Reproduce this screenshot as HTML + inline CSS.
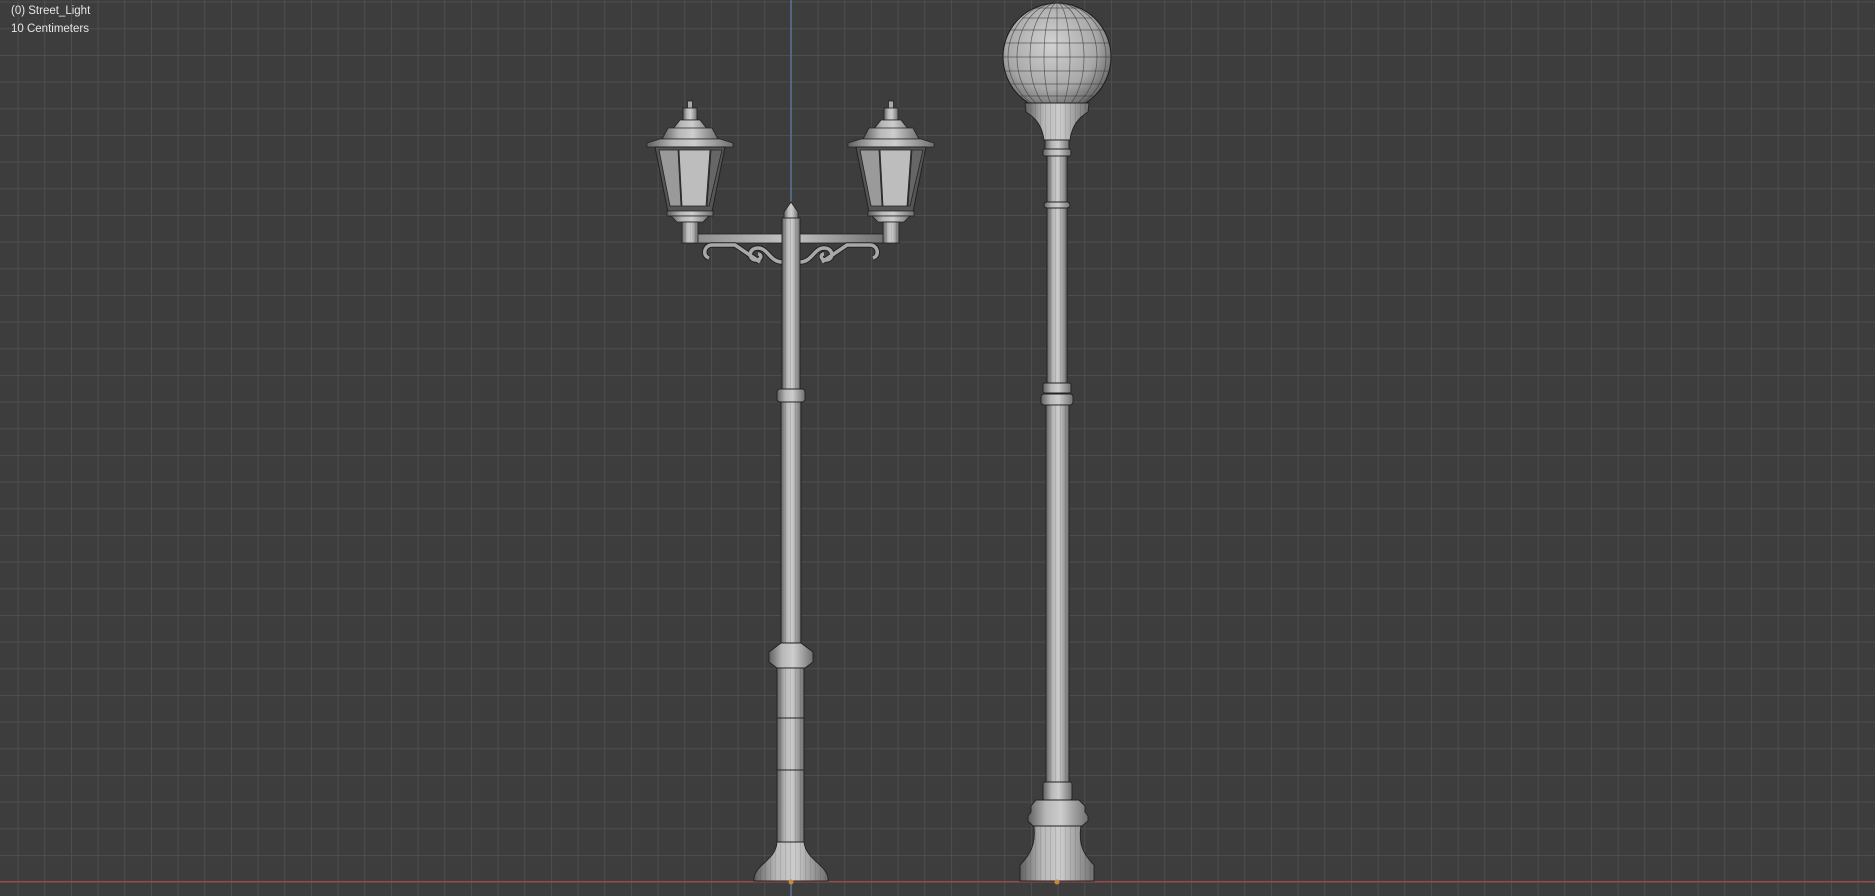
<!DOCTYPE html>
<html><head><meta charset="utf-8"><style>
html,body{margin:0;padding:0;background:#3d3d3d;overflow:hidden;width:1875px;height:896px}
.t{position:absolute;left:11px;color:#e6e6e6;font:11.5px "Liberation Sans",sans-serif;}
</style></head><body>
<svg width="1875" height="896" style="position:absolute;left:0;top:0">
<defs>
<pattern id="g" x="17.7" y="1.7" width="26.667" height="26.667" patternUnits="userSpaceOnUse">
<path d="M0 0H26.667M0 0V26.667" stroke="#535353" stroke-width="1.5" fill="none"/>
</pattern>
<linearGradient id="m" x1="0" x2="1" y1="0" y2="0">
<stop offset="0" stop-color="#606060"/><stop offset="0.3" stop-color="#b8b8b8"/><stop offset="0.55" stop-color="#cdcdcd"/><stop offset="1" stop-color="#707070"/>
</linearGradient>
<linearGradient id="gl" x1="0" x2="1"><stop offset="0" stop-color="#8a8a8a"/><stop offset="0.5" stop-color="#c4c4c4"/><stop offset="1" stop-color="#6a6a6a"/></linearGradient>
<radialGradient id="sp" cx="0.45" cy="0.38" r="0.6"><stop offset="0" stop-color="#d2d2d2"/><stop offset="0.7" stop-color="#a8a8a8"/><stop offset="1" stop-color="#6e6e6e"/></radialGradient>
<pattern id="w" width="5" height="10" patternUnits="userSpaceOnUse"><path d="M0 0V10" stroke="#222" stroke-opacity="0.3" stroke-width="0.8"/></pattern>
<g id="lant">
<rect x="-2.5" y="101" width="5" height="8" fill="#aaa" stroke="#222" stroke-width="0.8"/>
<rect x="-7" y="108" width="14" height="12" fill="url(#m)" stroke="#222" stroke-width="0.8"/>
<path d="M-10 120H10L22 135H-22Z" fill="url(#m)" stroke="#222" stroke-width="0.8"/>
<path d="M-22 128H22L28 139H-28Z" fill="url(#m)" stroke="#222" stroke-width="0.8"/>
<path d="M-30 139H30L43 143V147H-43V143Z" fill="url(#m)" stroke="#222" stroke-width="0.8"/>
<path d="M-35 147H35L22 212H-22Z" fill="#555" stroke="#222" stroke-width="1"/>
<path d="M-31 150H-12L-9 206H-20Z" fill="#9a9a9a" stroke="#222" stroke-width="0.8"/>
<path d="M-11 150H20L16 206H-8Z" fill="#bdbdbd" stroke="#222" stroke-width="0.8"/>
<path d="M21 150H32L19 206H17Z" fill="#666" stroke="#222" stroke-width="0.8"/>
<rect x="-23" y="211" width="46" height="5" fill="url(#m)" stroke="#222" stroke-width="0.8"/>
<path d="M-19 216H19L13 222H-13Z" fill="url(#m)" stroke="#222" stroke-width="0.8"/>
<rect x="-8" y="222" width="16" height="21" fill="url(#m)" stroke="#222" stroke-width="0.8"/>
<rect x="-8" y="222" width="16" height="21" fill="url(#w)"/>
</g>
</defs>
<rect width="1875" height="896" fill="#3d3d3d"/>
<rect width="1875" height="896" fill="url(#g)"/>
<line x1="791" y1="0" x2="791" y2="896" stroke="#5a7aa8" stroke-width="1.3"/>
<line x1="0" y1="881.7" x2="1875" y2="881.7" stroke="#9a4a4a" stroke-width="1.3"/>
<!-- left lamp -->
<rect x="690" y="234" width="201" height="9" fill="url(#gl)" stroke="#222" stroke-width="0.8"/>
<g fill="none" stroke="#222" stroke-width="5.5">
<path d="M782 262C770 262 768 248 758 248C748 248 748 260 756 260C762 260 762 254 758 254"/>
<path d="M760 262L735 245H712C704 245 702 256 709 258"/>
<path d="M800 262C812 262 814 248 824 248C834 248 834 260 826 260C820 260 820 254 824 254"/>
<path d="M822 262L847 245H870C878 245 880 256 873 258"/>
</g>
<g fill="none" stroke="#a8a8a8" stroke-width="3.5">
<path d="M782 262C770 262 768 248 758 248C748 248 748 260 756 260C762 260 762 254 758 254"/>
<path d="M760 262L735 245H712C704 245 702 256 709 258"/>
<path d="M800 262C812 262 814 248 824 248C834 248 834 260 826 260C820 260 820 254 824 254"/>
<path d="M822 262L847 245H870C878 245 880 256 873 258"/>
</g>
<use href="#lant" x="690"/>
<use href="#lant" x="891"/>
<path d="M791 202L784 212V218H798V212Z" fill="url(#m)" stroke="#222" stroke-width="0.8"/>
<rect x="782" y="218" width="18" height="171" fill="url(#m)" stroke="#222" stroke-width="0.9"/>
<rect x="782" y="218" width="18" height="171" fill="url(#w)"/>
<rect x="777" y="389" width="28" height="13" rx="3" fill="url(#m)" stroke="#222" stroke-width="0.9"/>
<rect x="781" y="402" width="20" height="241" fill="url(#m)" stroke="#222" stroke-width="0.9"/>
<rect x="781" y="402" width="20" height="241" fill="url(#w)"/>
<path d="M781 643H801L813 652V662L805 668H777L769 662V652Z" fill="url(#m)" stroke="#222" stroke-width="0.9"/>
<rect x="777" y="668" width="27" height="174" fill="url(#m)" stroke="#222" stroke-width="0.9"/>
<rect x="777" y="668" width="27" height="174" fill="url(#w)"/>
<line x1="777" y1="718" x2="804" y2="718" stroke="#222"/><line x1="777" y1="770" x2="804" y2="770" stroke="#222"/>
<path d="M777 842H804C806 860 826 864 828 878V881H754V878C756 864 776 860 777 842Z" fill="url(#m)" stroke="#222" stroke-width="0.9"/>
<path d="M777 842H804C806 860 826 864 828 878V881H754V878C756 864 776 860 777 842Z" fill="url(#w)"/>
<!-- right lamp -->
<circle cx="1057" cy="57" r="54" fill="url(#sp)" stroke="#1a1a1a" stroke-width="1"/>
<g fill="none" stroke="#333" stroke-width="0.7" stroke-opacity="0.7">
<ellipse cx="1057" cy="57" rx="13" ry="54"/><ellipse cx="1057" cy="57" rx="27" ry="54"/><ellipse cx="1057" cy="57" rx="40" ry="54"/><ellipse cx="1057" cy="57" rx="49" ry="54"/>
<line x1="1057" y1="3" x2="1057" y2="111"/>
<line x1="1010" y1="30" x2="1104" y2="30"/><line x1="1005" y1="43" x2="1109" y2="43"/><line x1="1003" y1="57" x2="1111" y2="57"/><line x1="1005" y1="71" x2="1109" y2="71"/><line x1="1010" y1="84" x2="1104" y2="84"/><line x1="1019" y1="96" x2="1095" y2="96"/><line x1="1022" y1="18" x2="1092" y2="18"/><line x1="1035" y1="8" x2="1079" y2="8"/>
</g>
<path d="M1025 103H1089L1088 112C1078 118 1072 126 1070 140H1044C1042 126 1036 118 1026 112Z" fill="url(#m)" stroke="#222" stroke-width="0.9"/>
<path d="M1025 103H1089L1088 112C1078 118 1072 126 1070 140H1044C1042 126 1036 118 1026 112Z" fill="url(#w)"/>
<rect x="1045" y="140" width="24" height="16" fill="url(#m)" stroke="#222" stroke-width="0.9"/>
<rect x="1043" y="149" width="28" height="7" rx="2" fill="url(#m)" stroke="#222" stroke-width="0.9"/>
<rect x="1047" y="156" width="20" height="227" fill="url(#m)" stroke="#222" stroke-width="0.9"/>
<rect x="1047" y="156" width="20" height="227" fill="url(#w)"/>
<rect x="1044" y="202" width="26" height="6" rx="3" fill="url(#m)" stroke="#222" stroke-width="0.9"/>
<rect x="1043" y="383" width="28" height="10" rx="2" fill="url(#m)" stroke="#222" stroke-width="0.9"/>
<rect x="1041" y="394" width="32" height="11" rx="3" fill="url(#m)" stroke="#222" stroke-width="0.9"/>
<rect x="1046" y="405" width="23" height="377" fill="url(#m)" stroke="#222" stroke-width="0.9"/>
<rect x="1046" y="405" width="23" height="377" fill="url(#w)"/>
<rect x="1043" y="782" width="29" height="18" rx="2" fill="url(#m)" stroke="#222" stroke-width="0.9"/>
<path d="M1036 800H1079L1085 806V812L1088 816V821L1082 826H1033L1028 821V816L1031 812V806Z" fill="url(#m)" stroke="#222" stroke-width="0.9"/>
<path d="M1034 826H1081C1078 845 1084 855 1094 865V881H1020V865C1030 855 1036 845 1034 826Z" fill="url(#m)" stroke="#222" stroke-width="0.9"/>
<path d="M1034 826H1081C1078 845 1084 855 1094 865V881H1020V865C1030 855 1036 845 1034 826Z" fill="url(#w)"/>
<circle cx="791" cy="882" r="2.5" fill="#c88a3a"/><circle cx="1057" cy="882" r="2.5" fill="#c88a3a"/>
</svg>
<div class="t" style="top:5px">(0) Street_Light</div>
<div class="t" style="top:23px">10 Centimeters</div>
</body></html>
